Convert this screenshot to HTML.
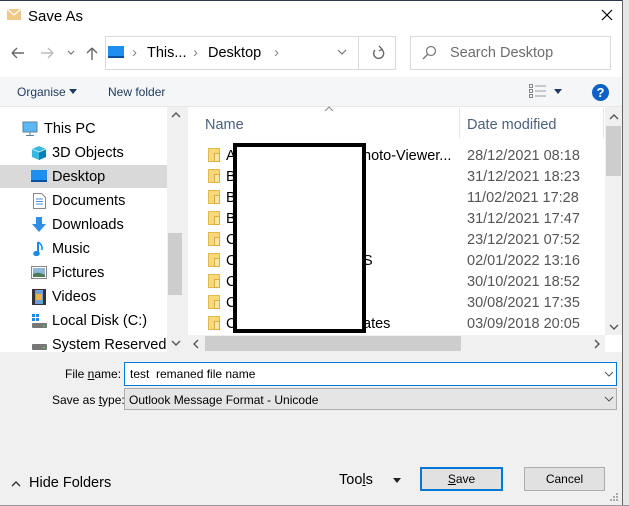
<!DOCTYPE html>
<html><head><meta charset="utf-8">
<style>
*{margin:0;padding:0;box-sizing:border-box}
body{width:629px;height:506px;overflow:hidden;background:#fff;font-family:"Liberation Sans",sans-serif;position:relative;color:#000}
.a{position:absolute}
.t{position:absolute;white-space:nowrap}
.nav{font-size:14.5px;left:52px}
.fold{position:absolute;left:208px;width:12px;height:14px;background:#f8d878;border:1px solid #e2b94d}
.fold:after{content:"";position:absolute;right:-1px;bottom:-1px;width:4px;height:7px;border:1px solid #d9ad3e;background:#fbe5a0}
.dt{position:absolute;left:467px;font-size:14.5px;color:#555}
.row{position:absolute;left:226px;font-size:14.5px;color:#000}
.ch{position:absolute;font-size:15px;color:#888}
</style></head><body>
<div class="a" style="left:0;top:0;width:629px;height:1px;background:#2b3a4a"></div>
<div class="a" style="left:622px;top:0;width:1px;height:506px;background:#666"></div>
<div class="a" style="left:623px;top:0;width:6px;height:506px;background:#e6e6e6"></div>
<div class="a" style="left:0;top:505px;width:629px;height:1px;background:#999"></div>

<svg class="a" style="left:7px;top:9px" width="14" height="11"><rect width="14" height="11" fill="#f0c98a"/><path d="M0 0 L7 6 L14 0" stroke="#fff" fill="none" stroke-width="1.2"/></svg>
<div class="t" style="left:28px;top:8px;font-size:15px">Save As</div>
<svg class="a" style="left:601px;top:9px" width="12" height="12"><path d="M1 1L11 11M11 1L1 11" stroke="#000" stroke-width="1.2"/></svg>

<svg class="a" style="left:10px;top:45px" width="100" height="16">
<path d="M2 8H14M2 8L7 3M2 8L7 13" stroke="#666" stroke-width="1.4" fill="none"/>
<path d="M31 8H43M43 8L38 3M43 8L38 13" stroke="#bbb" stroke-width="1.4" fill="none"/>
<path d="M58 6L61 9L64 6" stroke="#777" stroke-width="1.2" fill="none"/>
<path d="M82 15V3M82 3L77 8M82 3L87 8" stroke="#666" stroke-width="1.4" fill="none"/>
</svg>
<div class="a" style="left:105px;top:36px;width:291px;height:34px;border:1px solid #d9d9d9"></div>
<div class="a" style="left:358px;top:37px;width:1px;height:32px;background:#d9d9d9"></div>
<div class="a" style="left:108px;top:46px;width:16px;height:12px;background:#1e8ff0;border-bottom:2px solid #0a4fa0"></div>
<div class="ch" style="left:132px;top:44px">›</div>
<div class="t" style="left:147px;top:45px;font-size:14.5px">This...</div>
<div class="ch" style="left:193px;top:44px">›</div>
<div class="t" style="left:208px;top:45px;font-size:14.5px">Desktop</div>
<div class="ch" style="left:274px;top:44px">›</div>
<svg class="a" style="left:337px;top:48px" width="10" height="8"><path d="M1 2L5 6L9 2" stroke="#777" stroke-width="1.2" fill="none"/></svg>
<svg class="a" style="left:371px;top:45px" width="14" height="15"><path d="M10 4A5 5 0 1 1 4 5" stroke="#666" stroke-width="1.4" fill="none"/><path d="M8 1L11 4L8 6" stroke="#666" stroke-width="1.3" fill="none"/></svg>
<div class="a" style="left:410px;top:36px;width:201px;height:34px;border:1px solid #d9d9d9"></div>
<svg class="a" style="left:421px;top:45px" width="16" height="16"><circle cx="10" cy="6" r="4.5" stroke="#777" stroke-width="1.2" fill="none"/><path d="M7 9L2 14" stroke="#777" stroke-width="1.4"/></svg>
<div class="t" style="left:450px;top:45px;font-size:14.5px;color:#6d6d6d">Search Desktop</div>

<div class="a" style="left:0;top:77px;width:622px;height:30px;background:#f5f6f7;border-bottom:1px solid #e8e8e8"></div>
<div class="t" style="left:17px;top:85px;font-size:12px;color:#1e395b">Organise</div>
<svg class="a" style="left:69px;top:89px" width="9" height="6"><path d="M0 0H8L4 5Z" fill="#1e395b"/></svg>
<div class="t" style="left:108px;top:85px;font-size:12px;color:#1e395b">New folder</div>
<svg class="a" style="left:529px;top:84px" width="18" height="14"><g fill="none" stroke="#888"><rect x="0.5" y="0.5" width="3" height="3"/><rect x="0.5" y="5.5" width="3" height="3"/><rect x="0.5" y="10.5" width="3" height="3"/></g><path d="M6 2H17M6 7H17M6 12H17" stroke="#999"/></svg>
<svg class="a" style="left:554px;top:89px" width="9" height="6"><path d="M0 0H8L4 5Z" fill="#1e395b"/></svg>
<div class="a" style="left:592px;top:84px;width:17px;height:17px;border-radius:50%;background:#0f61c8;color:#fff;font-size:13px;font-weight:bold;text-align:center;line-height:17px">?</div>

<div class="a" style="left:0;top:165px;width:167px;height:23px;background:#d9d9d9"></div>
<div class="a" style="left:167px;top:107px;width:16px;height:245px;background:#f0f0f0"></div>
<div class="a" style="left:168px;top:233px;width:14px;height:62px;background:#cdcdcd"></div>
<svg class="a" style="left:171px;top:111px" width="10" height="8"><path d="M1 6L5 2L9 6" stroke="#555" stroke-width="1.4" fill="none"/></svg>
<svg class="a" style="left:171px;top:339px" width="10" height="8"><path d="M1 2L5 6L9 2" stroke="#555" stroke-width="1.4" fill="none"/></svg>
<div class="a" style="left:183px;top:107px;width:5px;height:245px;background:#f0f0f0"></div>

<svg class="a" style="left:22px;top:121px" width="16" height="16"><rect x="1" y="1" width="14" height="10" fill="#5bb8f5" stroke="#5f7f99"/><path d="M8 11V14M4 14.5H12" stroke="#5f7f99"/></svg>
<div class="t" style="left:44px;top:121px;font-size:14.5px">This PC</div>
<svg class="a" style="left:31px;top:145px" width="16" height="16"><path d="M8 1L15 4V12L8 15L1 12V4Z" fill="#39b8e0"/><path d="M8 7L15 4V12L8 15Z" fill="#0a7fb6"/><path d="M1 4L8 7L15 4" stroke="#aee6f7" fill="none"/></svg>
<div class="t nav" style="top:145px">3D Objects</div>
<div class="a" style="left:31px;top:170px;width:16px;height:12px;background:#1e8ff0;border-bottom:2px solid #0a4fa0"></div>
<div class="t nav" style="top:169px">Desktop</div>
<svg class="a" style="left:33px;top:193px" width="13" height="16"><path d="M0.5 0.5H8.5L12.5 4.5V15.5H0.5Z" fill="#fff" stroke="#888"/><path d="M3 6H10M3 8.5H10M3 11H10" stroke="#4a8fd8"/></svg>
<div class="t nav" style="top:193px">Documents</div>
<svg class="a" style="left:31px;top:217px" width="16" height="16"><path d="M5 0H11V7H15L8 15L1 7H5Z" fill="#2f8de4"/></svg>
<div class="t nav" style="top:217px">Downloads</div>
<svg class="a" style="left:33px;top:241px" width="12" height="16"><path d="M5 1V12" stroke="#1e88e5" stroke-width="2"/><ellipse cx="3.5" cy="12.5" rx="3.3" ry="2.6" fill="#1e88e5"/><path d="M5 1Q10 4 9 9" stroke="#1e88e5" stroke-width="1.6" fill="none"/></svg>
<div class="t nav" style="top:241px">Music</div>
<svg class="a" style="left:31px;top:266px" width="16" height="13"><rect x="0.5" y="0.5" width="15" height="12" fill="#fff" stroke="#888"/><rect x="2" y="2" width="12" height="9" fill="#8fb8d8"/><path d="M2 8Q7 5 14 9V11H2Z" fill="#4d7a5a"/></svg>
<div class="t nav" style="top:265px">Pictures</div>
<svg class="a" style="left:32px;top:289px" width="14" height="16"><rect width="14" height="16" fill="#333"/><rect x="3" y="1" width="8" height="14" fill="#6aa0d8"/><rect x="4" y="5" width="6" height="6" fill="#e9b44c"/></svg>
<div class="t nav" style="top:289px">Videos</div>
<svg class="a" style="left:31px;top:313px" width="16" height="16"><rect x="1" y="1" width="3" height="3" fill="#1e88e5"/><rect x="5" y="1" width="3" height="3" fill="#1e88e5"/><rect x="1" y="5" width="3" height="3" fill="#1e88e5"/><rect x="5" y="5" width="3" height="3" fill="#1e88e5"/><rect x="1" y="10" width="15" height="5" rx="1" fill="#777"/><rect x="12" y="12" width="2" height="1.5" fill="#5c5"/></svg>
<div class="t nav" style="top:313px">Local Disk (C:)</div>
<svg class="a" style="left:31px;top:337px" width="16" height="16"><rect x="1" y="7" width="15" height="6" rx="1" fill="#777"/><rect x="12" y="10" width="2" height="1.5" fill="#5c5"/></svg>
<div class="t nav" style="top:337px">System Reserved</div>

<svg class="a" style="left:324px;top:106px" width="10" height="6"><path d="M1 5L5 1L9 5" stroke="#888" fill="none"/></svg>
<div class="t" style="left:205px;top:117px;font-size:14.5px;color:#4c607a">Name</div>
<div class="a" style="left:459px;top:108px;width:1px;height:30px;background:#e5e5e5"></div>
<div class="t" style="left:467px;top:117px;font-size:14.5px;color:#4c607a">Date modified</div>
<div class="a" style="left:603px;top:108px;width:1px;height:30px;background:#e5e5e5"></div>
<div class="a" style="left:605px;top:107px;width:17px;height:228px;background:#f0f0f0"></div>
<div class="a" style="left:606px;top:126px;width:15px;height:50px;background:#cdcdcd"></div>
<svg class="a" style="left:609px;top:113px" width="10" height="8"><path d="M1 6L5 2L9 6" stroke="#555" stroke-width="1.4" fill="none"/></svg>
<svg class="a" style="left:609px;top:323px" width="10" height="8"><path d="M1 2L5 6L9 2" stroke="#555" stroke-width="1.4" fill="none"/></svg>
<div class="a" style="left:188px;top:335px;width:417px;height:17px;background:#f0f0f0"></div>
<div class="a" style="left:205px;top:336px;width:256px;height:15px;background:#cdcdcd"></div>
<svg class="a" style="left:192px;top:339px" width="8" height="10"><path d="M6 1L2 5L6 9" stroke="#555" stroke-width="1.4" fill="none"/></svg>
<svg class="a" style="left:593px;top:339px" width="8" height="10"><path d="M2 1L6 5L2 9" stroke="#555" stroke-width="1.4" fill="none"/></svg>

<div class="fold" style="top:148px"></div><div class="row" style="top:148px">A</div><div class="t" style="left:363px;top:148px;font-size:14.5px">hoto-Viewer...</div><div class="dt" style="top:148px">28/12/2021 08:18</div>
<div class="fold" style="top:169px"></div><div class="row" style="top:169px">B</div><div class="dt" style="top:169px">31/12/2021 18:23</div>
<div class="fold" style="top:190px"></div><div class="row" style="top:190px">B</div><div class="dt" style="top:190px">11/02/2021 17:28</div>
<div class="fold" style="top:211px"></div><div class="row" style="top:211px">B</div><div class="dt" style="top:211px">31/12/2021 17:47</div>
<div class="fold" style="top:232px"></div><div class="row" style="top:232px">C</div><div class="dt" style="top:232px">23/12/2021 07:52</div>
<div class="fold" style="top:253px"></div><div class="row" style="top:253px">C</div><div class="t" style="left:363px;top:253px;font-size:14.5px">S</div><div class="dt" style="top:253px">02/01/2022 13:16</div>
<div class="fold" style="top:274px"></div><div class="row" style="top:274px">C</div><div class="dt" style="top:274px">30/10/2021 18:52</div>
<div class="fold" style="top:295px"></div><div class="row" style="top:295px">C</div><div class="dt" style="top:295px">30/08/2021 17:35</div>
<div class="fold" style="top:316px"></div><div class="row" style="top:316px">C</div><div class="t" style="left:363px;top:316px;font-size:14.5px">ates</div><div class="dt" style="top:316px">03/09/2018 20:05</div>
<div class="a" style="left:233px;top:143px;width:133px;height:190px;background:#fff;border:4px solid #000"></div>

<div class="a" style="left:0;top:352px;width:622px;height:153px;background:#f0f0f0"></div>
<div class="t" style="left:65px;top:367px;font-size:12px">File <u>n</u>ame:</div>
<div class="a" style="left:124px;top:362px;width:493px;height:24px;background:#fff;border:1px solid #0078d7"></div>
<div class="t" style="left:130px;top:367px;font-size:12px">test&nbsp; remaned file name</div>
<svg class="a" style="left:604px;top:371px" width="10" height="7"><path d="M1 1L5 5L9 1" stroke="#555" fill="none"/></svg>
<div class="t" style="left:52px;top:393px;font-size:12px">Save as <u>t</u>ype:</div>
<div class="a" style="left:124px;top:388px;width:493px;height:22px;background:#e5e5e5;border:1px solid #adadad"></div>
<div class="t" style="left:129px;top:393px;font-size:12px">Outlook Message Format - Unicode</div>
<svg class="a" style="left:604px;top:396px" width="10" height="7"><path d="M1 1L5 5L9 1" stroke="#555" fill="none"/></svg>

<svg class="a" style="left:11px;top:480px" width="10" height="7"><path d="M1 6L5 2L9 6" stroke="#333" stroke-width="1.4" fill="none"/></svg>
<div class="t" style="left:29px;top:475px;font-size:14.5px">Hide Folders</div>
<div class="t" style="left:339px;top:472px;font-size:14.5px">Too<u>l</u>s</div>
<svg class="a" style="left:393px;top:478px" width="8" height="5"><path d="M0 0H8L4 5Z" fill="#222"/></svg>
<div class="a" style="left:420px;top:467px;width:83px;height:24px;background:#e1e1e1;border:2px solid #0078d7;font-size:12px;text-align:center;line-height:20px"><u>S</u>ave</div>
<div class="a" style="left:524px;top:467px;width:81px;height:24px;background:#e1e1e1;border:1px solid #adadad;font-size:12px;text-align:center;line-height:22px">Cancel</div>
<svg class="a" style="left:609px;top:492px" width="10" height="10" fill="#aaa"><rect x="7" y="1" width="2" height="2"/><rect x="4" y="4" width="2" height="2"/><rect x="7" y="4" width="2" height="2"/><rect x="1" y="7" width="2" height="2"/><rect x="4" y="7" width="2" height="2"/><rect x="7" y="7" width="2" height="2"/></svg>
</body></html>
